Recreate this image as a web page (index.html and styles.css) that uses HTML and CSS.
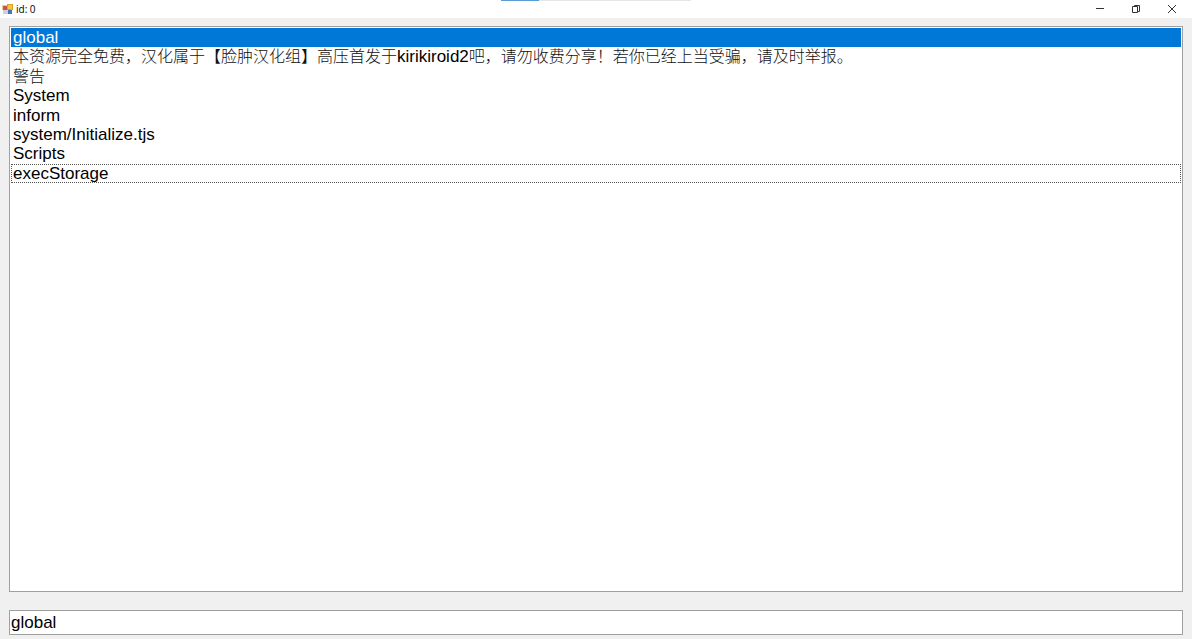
FILE: index.html
```html
<!DOCTYPE html>
<html lang="zh-CN">
<head>
    <meta charset="UTF-8">
    <meta name="viewport" content="width=device-width, initial-scale=1.0">
    <title>id: 0</title>
    <link rel="stylesheet" href="styles.css">
</head>
<body>
    <header class="titlebar">
        <div class="progress"><div class="progress-value"></div></div>
        <svg class="app-icon" viewBox="0 0 12 12">
            <rect x="0" y="2" width="5" height="5" fill="#e9c9a5"/>
            <rect x="1" y="3" width="4" height="4" fill="#c8553d"/>
            <rect x="5" y="1" width="6" height="6" fill="#d9a520"/>
            <rect x="6" y="2" width="4" height="4" fill="#f5c63c"/>
            <rect x="6" y="7" width="4" height="4" fill="#4a6fc0"/>
            <rect x="1" y="7" width="5" height="4" fill="#c9d2de"/>
        </svg>
        <h1 class="title">id: 0</h1>
        <div class="window-buttons">
            <button type="button" aria-label="Minimize">
                <svg viewBox="0 0 10 10"><path d="M1 4.5h8"/></svg>
            </button>
            <button type="button" aria-label="Restore">
                <svg viewBox="0 0 10 10"><path d="M1.5 2.5h5v6h-5zM3.5 2.5v-1h5v6h-2"/></svg>
            </button>
            <button type="button" aria-label="Close">
                <svg viewBox="0 0 10 10"><path d="M1 1l8 8M9 1l-8 8"/></svg>
            </button>
        </div>
    </header>

    <main class="content">
        <div class="list-box">
            <ul class="list" role="listbox" aria-label="Strings" tabindex="0">
                <li role="option" class="selected" aria-selected="true">global</li>
                <li role="option"><span class="cjk">本资源完全免费，汉化属于【脸肿汉化组】高压首发于</span>kirikiroid2<span class="cjk">吧，请勿收费分享！若你已经上当受骗，请及时举报。</span></li>
                <li role="option"><span class="cjk">警告</span></li>
                <li role="option">System</li>
                <li role="option">inform</li>
                <li role="option">system/Initialize.tjs</li>
                <li role="option">Scripts</li>
                <li role="option" class="focused">execStorage</li>
            </ul>
        </div>
        <input class="text-box" type="text" value="global" aria-label="Text">
    </main>
</body>
</html>
```

FILE: styles.css
```css
* {
    margin: 0;
    padding: 0;
    box-sizing: border-box;
}

body {
    font-family: "Liberation Sans", "Noto Sans CJK SC", sans-serif;
    font-size: 17px;
    color: #000;
    background-color: #f0f0f0;
    display: flex;
    flex-direction: column;
    height: 100vh;
}

.titlebar {
    position: relative;
    display: flex;
    align-items: center;
    height: 18px;
    padding: 0 2px;
    background-color: #fff;
}

.progress {
    position: absolute;
    top: 0;
    left: 42%;
    width: 16%;
    height: 1px;
    background-color: #e6e6e6;
}

.progress-value {
    width: 20%;
    height: 100%;
    background-color: #5b9bd5;
}

.app-icon {
    width: 12px;
    height: 12px;
}

.title {
    margin-left: 2px;
    font-family: "Open Sans", sans-serif;
    font-size: 10px;
    font-weight: 400;
}

.window-buttons {
    display: flex;
    margin-left: auto;
}

.window-buttons button {
    display: flex;
    align-items: center;
    justify-content: center;
    width: 36px;
    height: 18px;
    border: none;
    background: none;
}

.window-buttons button:hover {
    background-color: #e5e5e5;
}

.window-buttons svg {
    width: 10px;
    height: 10px;
    fill: none;
    stroke: #333;
}

.content {
    flex: 1;
    display: flex;
    flex-direction: column;
    gap: 18px;
    padding: 8px 9px 4px;
}

.list-box {
    flex: 1;
    padding: 1px;
    border: 1px solid #a0a0a0;
    background-color: #fff;
}

.list {
    display: grid;
    grid-template-rows: repeat(8, 1fr);
    height: 155px;
    list-style: none;
    outline: none;
}

.list li {
    padding-left: 2px;
    line-height: 19px;
    white-space: nowrap;
    min-height: 0;
}

.list .selected {
    color: #fff;
    background-color: #0078d7;
}

.list .focused {
    outline: 1px dotted #555;
    outline-offset: -1px;
}

.cjk {
    font-family: "Noto Sans CJK SC", sans-serif;
    font-size: 16px;
    font-weight: 300;
    line-height: 16px;
    color: #111;
}

.text-box {
    height: 25px;
    padding: 0 1px;
    border: 1px solid #a0a0a0;
    font: inherit;
    background-color: #fff;
    outline: none;
}
```
